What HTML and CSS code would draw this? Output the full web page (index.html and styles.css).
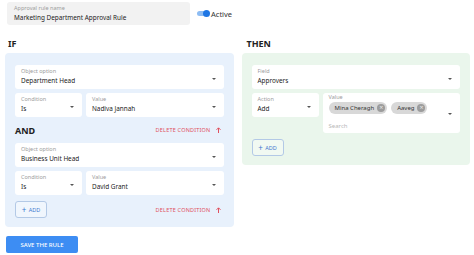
FILE: index.html
```html
<!DOCTYPE html>
<html lang="en">
<head>
    <meta charset="UTF-8">
    <meta name="viewport" content="width=device-width, initial-scale=1.0">
    <title>Approval Rule</title>
    <link rel="stylesheet" href="styles.css">
</head>
<body>
    <div class="page">
        <!-- Rule name + status -->
        <div class="top-row">
            <div class="name-field">
                <span class="field-label">Approval rule name</span>
                <span class="field-value">Marketing Department Approval Rule</span>
            </div>
            <div class="switch">
                <span class="track"><span class="knob"></span></span>
                <span class="switch-text">Active</span>
            </div>
        </div>

        <div class="rule-columns">
            <!-- IF block -->
            <section class="rule-col">
                <h2 class="col-title">IF</h2>
                <div class="panel panel-if">
                    <div class="select-field">
                        <div class="field-text">
                            <span class="field-label">Object option</span>
                            <span class="field-value">Department Head</span>
                        </div>
                        <span class="caret"></span>
                    </div>
                    <div class="field-row">
                        <div class="select-field small">
                            <div class="field-text">
                                <span class="field-label">Condition</span>
                                <span class="field-value">Is</span>
                            </div>
                            <span class="caret"></span>
                        </div>
                        <div class="select-field grow">
                            <div class="field-text">
                                <span class="field-label">Value</span>
                                <span class="field-value">Nadiva Jannah</span>
                            </div>
                            <span class="caret"></span>
                        </div>
                    </div>

                    <div class="and-row">
                        <span class="and-label">AND</span>
                        <button class="delete-btn">DELETE CONDITION
                            <svg width="5" height="6" viewBox="0 0 5 6"><path d="M2.5 6V1M0.5 2.8L2.5 0.8L4.5 2.8" stroke="#e0505f" stroke-width="1" fill="none"/></svg>
                        </button>
                    </div>

                    <div class="select-field">
                        <div class="field-text">
                            <span class="field-label">Object option</span>
                            <span class="field-value">Business Unit Head</span>
                        </div>
                        <span class="caret"></span>
                    </div>
                    <div class="field-row">
                        <div class="select-field small">
                            <div class="field-text">
                                <span class="field-label">Condition</span>
                                <span class="field-value">Is</span>
                            </div>
                            <span class="caret"></span>
                        </div>
                        <div class="select-field grow">
                            <div class="field-text">
                                <span class="field-label">Value</span>
                                <span class="field-value">David Grant</span>
                            </div>
                            <span class="caret"></span>
                        </div>
                    </div>

                    <div class="action-row">
                        <button class="add-btn"><span class="plus">+</span> ADD</button>
                        <button class="delete-btn">DELETE CONDITION
                            <svg width="5" height="6" viewBox="0 0 5 6"><path d="M2.5 6V1M0.5 2.8L2.5 0.8L4.5 2.8" stroke="#e0505f" stroke-width="1" fill="none"/></svg>
                        </button>
                    </div>
                </div>
            </section>

            <!-- THEN block -->
            <section class="rule-col">
                <h2 class="col-title then">THEN</h2>
                <div class="panel panel-then">
                    <div class="select-field">
                        <div class="field-text">
                            <span class="field-label">Field</span>
                            <span class="field-value">Approvers</span>
                        </div>
                        <span class="caret"></span>
                    </div>
                    <div class="field-row top">
                        <div class="select-field small">
                            <div class="field-text">
                                <span class="field-label">Action</span>
                                <span class="field-value">Add</span>
                            </div>
                            <span class="caret"></span>
                        </div>
                        <div class="select-field grow multi">
                            <div class="field-text">
                                <span class="field-label">Value</span>
                                <div class="chips">
                                    <span class="chip">Mina Cheragh <span class="chip-x">&times;</span></span>
                                    <span class="chip">Aaveg <span class="chip-x">&times;</span></span>
                                </div>
                                <span class="search">Search</span>
                            </div>
                            <span class="caret"></span>
                        </div>
                    </div>
                    <div class="action-row">
                        <button class="add-btn"><span class="plus">+</span> ADD</button>
                    </div>
                </div>
            </section>
        </div>

        <button class="save-btn">SAVE THE RULE</button>
    </div>
</body>
</html>
```

FILE: styles.css
```css
/* General Styling */
body {
    font-family: 'Noto Sans', sans-serif;
    margin: 0;
    padding: 0;
    background: #ffffff;
    color: #222;
}

button {
    font-family: inherit;
    border: none;
    background: none;
    padding: 0;
    cursor: pointer;
}

.page {
    padding: 2px 4px 0 5px;
}

/* Top Row */
.top-row {
    display: flex;
    align-items: center;
    gap: 7px;
    padding-left: 2px;
}

.name-field {
    width: 183px;
    height: 23px;
    padding: 3px 7px 0;
    box-sizing: border-box;
    background: #f2f2f2;
    border-radius: 3px;
    display: flex;
    flex-direction: column;
}

.switch {
    display: flex;
    align-items: center;
    gap: 2px;
}

.track {
    position: relative;
    width: 11px;
    height: 5px;
    border-radius: 3px;
    background: #8dbcf3;
}

.knob {
    position: absolute;
    right: -2px;
    top: -1px;
    width: 7px;
    height: 7px;
    border-radius: 50%;
    background: #1e76e4;
}

.switch-text {
    font-size: 7.5px;
    color: #333;
    margin-left: 1px;
}

/* Columns */
.rule-columns {
    display: flex;
    gap: 8px;
    align-items: flex-start;
    margin-top: 12px;
}

.rule-col {
    flex: 1;
}

.col-title {
    font-size: 9px;
    font-weight: bold;
    line-height: 14px;
    margin: 0 0 2px;
    padding-left: 3px;
}

.col-title.then {
    padding-left: 5px;
}

.panel {
    border-radius: 4px;
    padding: 12px 10px 9px;
    display: flex;
    flex-direction: column;
    gap: 4px;
}

.panel-if {
    background: #e8f1fc;
}

.panel-then {
    background: #eaf6ec;
}

/* Fields */
.select-field {
    background: #ffffff;
    border-radius: 3px;
    height: 24px;
    box-sizing: border-box;
    padding: 3px 8px 0 6px;
    display: flex;
    align-items: center;
}

.select-field.small {
    width: 67px;
}

.select-field.grow {
    flex: 1;
}

.select-field.multi {
    height: 40px;
    padding-top: 1px;
}

.field-text {
    flex: 1;
    display: flex;
    flex-direction: column;
    align-self: flex-start;
}

.field-label {
    font-size: 5.5px;
    line-height: 7px;
    color: #9c9c9c;
}

.field-value {
    font-size: 6.4px;
    line-height: 11px;
    color: #222;
}

.caret {
    width: 0;
    height: 0;
    border-left: 2px solid transparent;
    border-right: 2px solid transparent;
    border-top: 2.5px solid #555;
}

.field-row {
    display: flex;
    gap: 4px;
}

.field-row.top {
    align-items: flex-start;
}

/* Chips */
.chips {
    display: flex;
    gap: 4px;
    margin-top: 1px;
}

.chip {
    display: flex;
    align-items: center;
    gap: 3px;
    height: 12px;
    padding: 0 2px 0 6px;
    border-radius: 6px;
    background: #d8d8d8;
    font-size: 6px;
    color: #333;
}

.chip-x {
    width: 8px;
    height: 8px;
    border-radius: 50%;
    background: #9c9c9c;
    color: #e6e6e6;
    font-size: 7px;
    line-height: 8px;
    text-align: center;
}

.search {
    font-size: 6px;
    line-height: 10px;
    color: #b8b8b8;
    margin-top: 7px;
}

/* AND / Delete */
.and-row {
    display: flex;
    align-items: center;
    justify-content: space-between;
    height: 18px;
}

.and-label {
    font-size: 9px;
    font-weight: bold;
}

.delete-btn {
    display: flex;
    align-items: center;
    gap: 5px;
    padding-right: 3px;
    color: #e0505f;
    font-size: 5.5px;
    letter-spacing: 0.2px;
}

.action-row {
    display: flex;
    align-items: center;
    justify-content: space-between;
    margin-top: 2px;
}

.add-btn {
    width: 32px;
    height: 17px;
    border: 1px solid #b3c9e6;
    border-radius: 3px;
    background: rgba(255, 255, 255, 0.35);
    color: #3d78cf;
    font-size: 5.5px;
}

.plus {
    font-size: 8px;
    vertical-align: -1px;
    margin-right: 1px;
}

/* Save */
.save-btn {
    margin: 9px 0 0 1px;
    width: 72px;
    height: 17px;
    border-radius: 2px;
    background: #3d8df3;
    color: #fff;
    font-size: 6px;
    font-weight: 500;
}
```
